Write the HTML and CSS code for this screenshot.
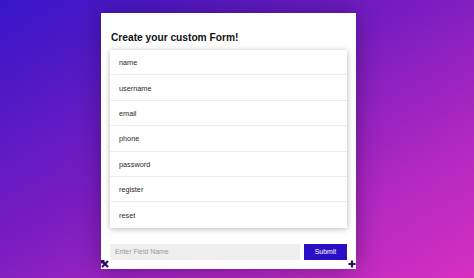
FILE: index.html
```html
<!DOCTYPE html>
<html>
<head>
<meta charset="utf-8">
<link rel="stylesheet" href="styles.css">
</head>
<body>
<div class="page">
  <div class="card">
    <h1 class="title">Create your custom Form!</h1>
    <ul class="fields">
      <li class="field">name</li>
      <li class="field">username</li>
      <li class="field">email</li>
      <li class="field">phone</li>
      <li class="field">password</li>
      <li class="field">register</li>
      <li class="field">reset</li>
    </ul>
    <div class="add-row">
      <input class="field-input" type="text" placeholder="Enter Field Name">
      <button class="submit">Submit</button>
    </div>
    <svg class="corner corner-left" viewBox="0 0 8 8" width="8" height="8">
      <path d="M1 1 L7 7 M7 1 L1 7" stroke="#2b0a5e" stroke-width="2.2" fill="none"/>
      <path d="M0 0 H3.5 V3.5 H0 Z" fill="#2b0a5e"/>
    </svg>
    <svg class="corner corner-right" viewBox="0 0 8 8" width="8" height="8">
      <path d="M4 0.5 V7.5 M0.5 4 H7.5" stroke="#2b0a5e" stroke-width="2.2" fill="none"/>
    </svg>
  </div>
</div>
</body>
</html>
```

FILE: styles.css
```css
html, body {
  margin: 0;
  padding: 0;
  height: 100%;
}
body {
  font-family: "Liberation Sans", Arial, sans-serif;
  background: linear-gradient(150deg, #3616c9 0%, #7a1dc0 45%, #b228c1 75%, #d630c0 100%);
  overflow: hidden;
}
.page {
  height: 278px;
  padding: 13px 0 0 101px;
  box-sizing: border-box;
}
.card {
  position: relative;
  width: 255px;
  box-sizing: border-box;
  background: #fff;
  padding: 19px 9px 9px 9px;
  box-shadow: 0 0 22px rgba(30, 0, 60, 0.45);
}
.title {
  margin: 0 0 6px 0;
  font-size: 10.2px;
  line-height: 12px;
  font-weight: bold;
  color: #111;
  padding-left: 1px;
}
.fields {
  list-style: none;
  margin: 0;
  padding: 0;
  background: #fff;
  box-shadow: 0 1px 6px rgba(0, 0, 0, 0.28);
}
.field {
  height: 25.4px;
  box-sizing: border-box;
  display: flex;
  align-items: center;
  padding: 1px 0 0 9px;
  font-size: 7.3px;
  color: #2a2a2a;
  border-bottom: 1px solid #ececec;
}
.field:last-child {
  border-bottom: none;
}
.add-row {
  display: flex;
  gap: 4px;
  margin-top: 16px;
  height: 16px;
}
.field-input {
  width: 190px;
  height: 16px;
  box-sizing: border-box;
  border: none;
  background: #efefef;
  padding: 0 0 0 5px;
  margin: 0;
  font-family: "Liberation Sans", Arial, sans-serif;
  font-size: 6.9px;
  color: #333;
  outline: none;
}
.field-input::placeholder {
  color: #9a9a9a;
}
.submit {
  width: 43px;
  height: 16px;
  border: none;
  margin: 0;
  padding: 0;
  background: #2a0fc4;
  color: #fff;
  font-family: "Liberation Sans", Arial, sans-serif;
  font-size: 6.9px;
}
.corner {
  position: absolute;
  bottom: 1px;
  display: block;
}
.corner-left {
  left: 0;
}
.corner-right {
  right: 0;
}
```
